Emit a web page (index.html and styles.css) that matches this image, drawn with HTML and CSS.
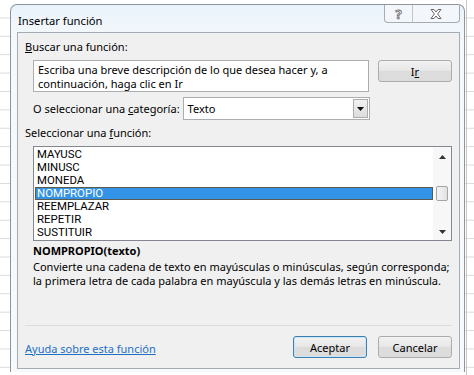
FILE: index.html
```html
<!DOCTYPE html>
<html lang="es">
  <head>
    <meta charset="UTF-8" />
    <title>Insertar función</title>
    <link rel="stylesheet" href="styles.css">
  </head>
  <body>
    <div class="dialog">
      <div class="titlebar">
        <span class="title">Insertar función</span>
        <div class="controls">
          <span class="ctl help">?</span>
          <span class="ctl close">
            <svg width="12" height="10" viewBox="0 0 12 10">
              <path d="M1 0.5 H4 L6 3 L8 0.5 H11 L7.6 5 L11 9.5 H8 L6 7 L4 9.5 H1 L4.4 5 Z" fill="#fff" stroke="#666" stroke-width="1" />
            </svg>
          </span>
        </div>
      </div>
      <div class="panel">
        <div class="label"><u>B</u>uscar una función:</div>
        <div class="search-row">
          <div class="search-box">Escriba una breve descripción de lo que desea hacer y, a<br>continuación, haga clic en Ir</div>
          <button class="btn">I<u>r</u></button>
        </div>
        <div class="cat-row">
          <span>O seleccionar una <u>c</u>ategoría:</span>
          <div class="select">
            <span>Texto</span>
            <span class="drop">
              <svg width="7" height="4" viewBox="0 0 7 4"><path d="M0 0 H7 L3.5 4 Z" fill="#111" /></svg>
            </span>
          </div>
        </div>
        <div class="label">Seleccionar una <u>f</u>unción:</div>
        <div class="listbox">
          <ul class="items">
            <li>MAYUSC</li>
            <li>MINUSC</li>
            <li>MONEDA</li>
            <li class="selected">NOMPROPIO</li>
            <li>REEMPLAZAR</li>
            <li>REPETIR</li>
            <li>SUSTITUIR</li>
          </ul>
          <div class="scrollbar">
            <svg class="arrow" width="7" height="4" viewBox="0 0 7 4"><path d="M0 4 H7 L3.5 0 Z" fill="#333" /></svg>
            <div class="thumb"></div>
            <svg class="arrow" width="7" height="4" viewBox="0 0 7 4"><path d="M0 0 H7 L3.5 4 Z" fill="#333" /></svg>
          </div>
        </div>
        <div class="syntax">NOMPROPIO(texto)</div>
        <div class="desc">Convierte una cadena de texto en mayúsculas o minúsculas, según corresponda;<br>la primera letra de cada palabra en mayúscula y las demás letras en minúscula.</div>
        <div class="footer">
          <a href="#" class="help-link">Ayuda sobre esta función</a>
          <div class="buttons">
            <button class="btn default">Aceptar</button>
            <button class="btn">Cancelar</button>
          </div>
        </div>
      </div>
    </div>
  </body>
</html>
```

FILE: styles.css
```css
body {
  margin: 0;
  height: 375px;
  overflow: hidden;
  font-family: "Noto Sans", "Open Sans", sans-serif;
  font-size: 11px;
  color: #000;
  background-color: #fff;
  background-image:
    linear-gradient(to right, transparent 466px, #c8c8c8 466px, #c8c8c8 467px, transparent 467px),
    linear-gradient(to bottom, transparent 17.4px, #dadada 17.4px);
  background-size: 100% 100%, 100% 18.4px;
  padding-top: 4px;
  box-sizing: border-box;
}
.dialog {
  margin-left: 10px;
  width: 455px;
  height: 368px;
  border: 1px solid #8c949c;
  border-bottom: none;
  border-radius: 7px 7px 0 0;
  background: linear-gradient(to bottom, #eaf3fb, #f6f9fc 40px, #f7f9fb);
  box-sizing: border-box;
  display: flex;
  flex-direction: column;
}
.titlebar {
  height: 27px;
  display: flex;
  justify-content: space-between;
  align-items: flex-start;
}
.title {
  font-size: 11.2px;
  padding-left: 7px;
  padding-top: 8px;
}
.controls {
  display: flex;
  margin-right: 4px;
  border: 1px solid #a7acb2;
  border-top: none;
  border-radius: 0 0 4px 4px;
  height: 17px;
  background: #f3f7fb;
}
.ctl {
  display: flex;
  align-items: center;
  justify-content: center;
}
.help {
  width: 27px;
  border-right: 1px solid #c2c7cc;
  font-size: 13px;
  font-weight: bold;
  color: #fff;
  -webkit-text-stroke: 0.8px #666;
}
.close {
  width: 46px;
}
.panel {
  flex: 1;
  margin: 0 4px 3px 6px;
  border: 1px solid #a6acb3;
  background-color: #f0f0f0;
  display: flex;
  flex-direction: column;
  padding: 7px 7px 0 7px;
}
.label {
  line-height: 14px;
}
.search-row {
  display: flex;
  justify-content: space-between;
  margin: 6px 0 0 8px;
}
.search-box {
  width: 336px;
  height: 32px;
  box-sizing: border-box;
  border: 1px solid #abadb3;
  background-color: #fff;
  padding: 2px 4px;
  line-height: 13.5px;
}
.btn {
  width: 74px;
  height: 22px;
  font-family: inherit;
  font-size: 11px;
  color: #000;
  border: 1px solid #acacac;
  border-radius: 3px;
  background: linear-gradient(to bottom, #f2f2f2, #e6e6e6 50%, #dcdcdc 51%, #dddddd);
  padding: 0;
}
.btn.default {
  border-color: #3c7fb1;
  box-shadow: inset 0 0 0 1px #cde6f7;
}
.cat-row {
  display: flex;
  align-items: center;
  margin: 5px 0 0 8px;
}
.select {
  margin-left: 3px;
  width: 187px;
  height: 23px;
  box-sizing: border-box;
  border: 1px solid #abadb3;
  background-color: #fff;
  display: flex;
  justify-content: space-between;
  align-items: center;
  padding-left: 4px;
}
.drop {
  width: 15px;
  height: 19px;
  margin-right: 1px;
  border: 1px solid #acacac;
  box-sizing: border-box;
  background: linear-gradient(to bottom, #f2f2f2, #dcdcdc);
  display: flex;
  align-items: center;
  justify-content: center;
}
.label + .listbox {
  margin-top: 6px;
}
.cat-row + .label {
  margin-top: 6px;
}
.listbox {
  margin-left: 8px;
  width: 419px;
  height: 95px;
  box-sizing: border-box;
  border: 1px solid #828790;
  background-color: #fff;
  display: flex;
}
.items {
  list-style: none;
  margin: 0;
  padding: 1px 0 0 1px;
  flex: 1;
  font-family: Roboto, "Noto Sans", sans-serif;
  font-size: 11.4px;
}
.items li {
  height: 13px;
  line-height: 13px;
  padding-left: 2px;
  box-sizing: border-box;
}
.items li.selected {
  background-color: #3393e6;
  color: #fff;
  border: 1px solid #5d5a48;
  padding-left: 1px;
  line-height: 11px;
}
.scrollbar {
  width: 18px;
  background-color: #f7f7f7;
  display: flex;
  flex-direction: column;
  align-items: center;
  padding: 8px 0 6px;
  box-sizing: border-box;
}
.thumb {
  width: 12px;
  height: 15px;
  margin: 27px 0 auto;
  border: 1px solid #a4a4a4;
  border-radius: 2px;
  box-sizing: border-box;
  background: linear-gradient(to right, #f4f4f4, #e2e2e2);
}
.syntax {
  font-weight: bold;
  margin: 3px 0 0 8px;
  line-height: 14px;
}
.desc {
  margin: 2px 0 0 8px;
  line-height: 14px;
}
.footer {
  margin-top: auto;
  border-top: 1px solid #dcdcdc;
  display: flex;
  justify-content: space-between;
  align-items: center;
  height: 42px;
  margin-bottom: 0;
}
.help-link {
  color: #1c6fc4;
  padding-top: 2px;
}
.buttons {
  display: flex;
  gap: 11px;
}
u {
  text-decoration: underline;
}
```
